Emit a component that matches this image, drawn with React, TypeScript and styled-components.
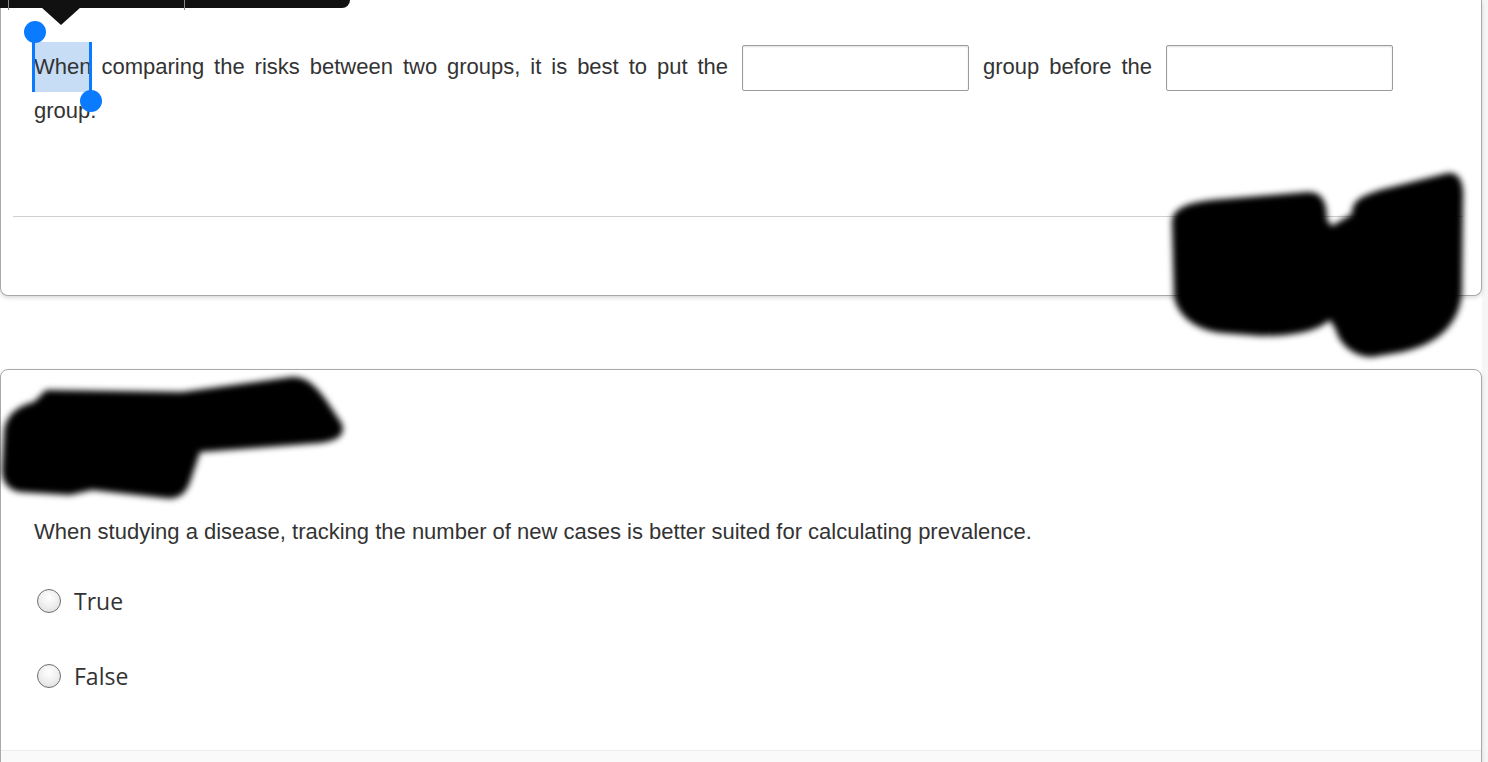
import React from "react";
import styled, { createGlobalStyle } from "styled-components";

const GlobalStyle = createGlobalStyle`
  html, body { margin: 0; padding: 0; background: #ffffff; }
  body { overflow: hidden; font-family: "Liberation Sans", Arial, sans-serif; }
`;

const Page = styled.div`
  position: relative;
  width: 1488px;
  height: 762px;
  overflow: hidden;
  background: linear-gradient(to right, #ffffff 1482px, #f6f6f6 1482px);
`;

const Column = styled.div`
  display: flex;
  flex-direction: column;
  width: 1482px;
  gap: 73px;
`;

const Card = styled.section<{ $top?: boolean }>`
  box-sizing: border-box;
  width: 1482px;
  background: #ffffff;
  border: 1px solid #a9a9a9;
  border-top: ${(p) => (p.$top ? "none" : "1px solid #a9a9a9")};
  border-radius: ${(p) => (p.$top ? "0 0 8px 8px" : "8px 8px 0 0")};
  box-shadow: 0 2px 4px rgba(0, 0, 0, 0.14);
  color: #333333;
`;

const FillText = styled.div`
  box-sizing: border-box;
  width: 1396px;
  padding: 45px 0 0 33px;
  font-size: 22px;
  line-height: 43px;
  text-align: justify;
  text-align-last: left;
`;

const Blank = styled.input`
  box-sizing: border-box;
  width: 227px;
  height: 46px;
  margin: -2px 4px;
  vertical-align: middle;
  border: 1px solid #9c9c9c;
  border-radius: 2px;
  background: #ffffff;
  box-shadow: inset 0 1px 2px rgba(0, 0, 0, 0.12);
`;

const Selected = styled.span`
  position: relative;
  background: #c7ddf6;
  padding: 12px 0 13px 0;
`;

const Bar = styled.span<{ $side: "start" | "end" }>`
  position: absolute;
  width: 3px;
  background: #0a7aff;
  ${(p) =>
    p.$side === "start"
      ? "left: -2px; top: -9px; bottom: 0;"
      : "right: -1px; top: 0; bottom: 0;"}
`;

const Knob = styled.span<{ $side: "start" | "end" }>`
  position: absolute;
  width: 22px;
  height: 22px;
  border-radius: 50%;
  background: #0a7aff;
  ${(p) =>
    p.$side === "start"
      ? "left: -10px; top: -21px;"
      : "right: -11px; bottom: -20px;"}
`;

const Rule = styled.hr`
  margin: 84px 18px 0 12px;
  border: none;
  border-top: 1px solid #cfcfcf;
  height: 0;
`;

const CardBottomSpace = styled.div`
  height: 78px;
`;

const Header = styled.div`
  height: 150px;
  padding: 40px 0 0 44px;
  box-sizing: border-box;
  font-size: 22px;
  font-weight: bold;
  color: #000;
`;

const Prompt = styled.p`
  margin: 0;
  padding-left: 33px;
  font-size: 22px;
  line-height: 24px;
`;

const Options = styled.div`
  display: flex;
  flex-direction: column;
  gap: 44px;
  padding: 41px 0 0 36px;
`;

const Option = styled.label`
  display: flex;
  align-items: center;
  gap: 13px;
  height: 31px;
  font-family: "Open Sans", sans-serif;
  font-size: 23px;
  color: #333333;
`;

const Radio = styled.span`
  box-sizing: border-box;
  width: 24px;
  height: 24px;
  border-radius: 50%;
  border: 1.5px solid #6e6e6e;
  background: radial-gradient(circle at 50% 35%, #ffffff 0%, #f1f1f1 45%, #d9d9d9 100%);
`;

const Footer = styled.div`
  margin-top: 59px;
  height: 40px;
  border-top: 1px solid #ececec;
  background: #fafafa;
`;

const Menu = styled.div`
  position: absolute;
  left: 0;
  top: 0;
  width: 350px;
  height: 8px;
  background: #111111;
  border-bottom-right-radius: 10px;
`;

const MenuSep = styled.span<{ $x: number }>`
  position: absolute;
  top: 0;
  left: ${(p) => p.$x}px;
  width: 1px;
  height: 10px;
  background: #8a8a8a;
`;

const Pointer = styled.svg`
  position: absolute;
  left: 41px;
  top: 7px;
`;

const Redaction = styled.svg`
  position: absolute;
  left: 0;
  top: 0;
  pointer-events: none;
`;

export default function App() {
  return (
    <>
      <GlobalStyle />
      <Page>
        <Column>
          <Card $top>
            <FillText>
              <Selected>
                When
                <Bar $side="start" />
                <Knob $side="start" />
                <Bar $side="end" />
                <Knob $side="end" />
              </Selected>{" "}
              comparing the risks between two groups, it is best to put the{" "}
              <Blank type="text" aria-label="blank 1" /> group before the{" "}
              <Blank type="text" aria-label="blank 2" /> group.
            </FillText>
            <Rule />
            <CardBottomSpace />
          </Card>
          <Card>
            <Header>Question 2</Header>
            <Prompt>
              When studying a disease, tracking the number of new cases is better suited for
              calculating prevalence.
            </Prompt>
            <Options>
              <Option>
                <Radio />
                True
              </Option>
              <Option>
                <Radio />
                False
              </Option>
            </Options>
            <Footer />
          </Card>
        </Column>

        <Menu>
          <MenuSep $x={8} />
          <MenuSep $x={184} />
        </Menu>
        <Pointer width="40" height="19" viewBox="0 0 40 19">
          <path d="M0 0 L40 0 L20 18 Z" fill="#111111" />
        </Pointer>

        <Redaction width="1488" height="762" viewBox="0 0 1488 762">
          <defs>
            <filter id="soft" x="-10%" y="-10%" width="120%" height="120%">
              <feGaussianBlur stdDeviation="3" />
            </filter>
          </defs>
          <path
            filter="url(#soft)"
            fill="#000"
            d="M1172,222 C1172,206 1195,202 1212,200 L1308,192 C1324,192 1327,205 1327,220 L1332,226 L1352,214 C1352,200 1362,196 1380,190 L1448,173 C1461,172 1464,185 1463,200 L1462,292 C1460,322 1440,344 1402,352 L1372,357 C1356,357 1340,346 1336,330 L1330,320 C1318,330 1298,336 1262,336 L1222,333 C1192,330 1176,312 1174,296 Z"
          />
          <path
            filter="url(#soft)"
            fill="#000"
            d="M4,432 C6,412 22,405 34,402 L46,390 L182,392 L292,377 C306,376 316,386 326,400 L342,424 C346,436 336,441 320,443 L200,452 L190,482 C185,496 176,500 164,498 L92,490 L70,495 L20,492 C8,490 2,482 2,470 Z"
          />
        </Redaction>
      </Page>
    </>
  );
}
